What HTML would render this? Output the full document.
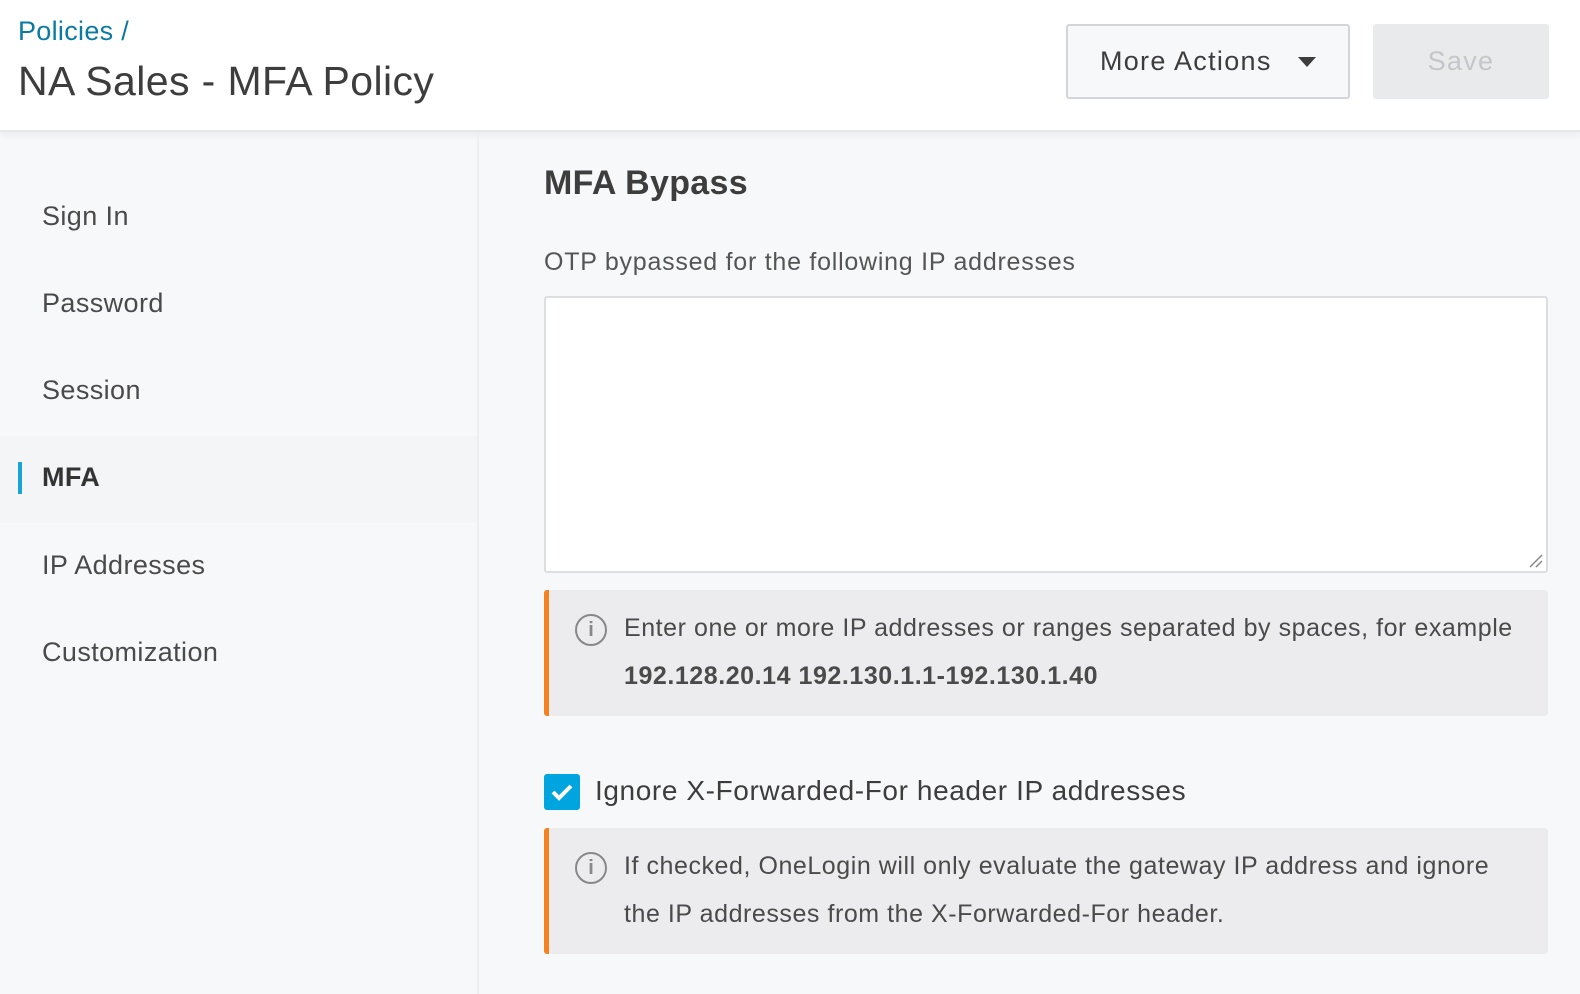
<!DOCTYPE html>
<html><head><style>
*{box-sizing:border-box;margin:0;padding:0}
body{width:1580px;height:994px;background:#f7f8fa;font-family:"Liberation Sans",sans-serif;color:#444;position:relative;overflow:hidden}
.hdr{position:absolute;left:0;top:0;width:1580px;height:132px;background:#fff;border-bottom:2px solid #e6e7e9;box-shadow:0 3px 8px rgba(0,0,0,.06)}
.bc{position:absolute;left:18px;top:16px;font-size:27px;color:#0a7aa3;letter-spacing:.3px}
.title{position:absolute;left:18px;top:58px;font-size:41px;color:#3d3d3d;letter-spacing:.4px}
.btn{position:absolute;top:24px;height:75px;border-radius:3px;font-size:27px;letter-spacing:1.3px;display:flex;align-items:center;justify-content:center}
.more{left:1066px;width:284px;border:2px solid #d3d5d8;background:#f7f8fa;color:#3d3d3d}
.save{left:1373px;width:176px;background:#e9eaec;color:#c4c6c9}
.side{position:absolute;left:0;top:133px;width:479px;height:861px;border-right:2px solid #eceef0}
.nav{position:absolute;left:42px;font-size:27px;color:#4a4a4a;letter-spacing:.4px}
.act{position:absolute;left:0;top:303px;width:477px;height:87px;background:#f3f5f7}
.bar{position:absolute;left:18px;top:462px;width:4px;height:32px;background:#1aa3d6}
.h2{position:absolute;left:544px;top:164px;font-size:34px;font-weight:bold;color:#3d3d3d;letter-spacing:.3px}
.lbl{position:absolute;left:544px;top:248px;font-size:25px;color:#555;letter-spacing:.75px}
.ta{position:absolute;left:544px;top:296px;width:1004px;height:277px;background:#fff;border:2px solid #dcdee1;border-radius:3px}
.info{position:absolute;left:544px;width:1004px;background:#ececee;border-left:5px solid #f5821f;border-radius:3px}
.info p{position:absolute;left:75px;font-size:25px;color:#4a4a4a;line-height:48px;letter-spacing:.55px}
.ic{position:absolute;left:26px;width:32px;height:32px;border:2px solid #888;border-radius:50%;color:#888;font-size:20px;font-weight:bold;text-align:center;line-height:28px}
.cb{position:absolute;left:544px;top:774px;width:36px;height:36px;background:#00a4de;border-radius:3px}
.cbl{position:absolute;left:595px;top:775px;font-size:28px;color:#3d3d3d;letter-spacing:.6px}
</style></head><body>
<div class="hdr">
<div class="bc">Policies /</div>
<div class="title">NA Sales - MFA Policy</div>
<div class="btn more">More Actions&nbsp;&nbsp;&nbsp;<svg width="18" height="10"><path d="M0 0h18L9 10z" fill="#3d3d3d"/></svg></div>
<div class="btn save">Save</div>
</div>
<div class="side">
<div class="act"></div>
</div>
<div class="bar"></div>
<div class="nav" style="top:201px">Sign In</div>
<div class="nav" style="top:288px">Password</div>
<div class="nav" style="top:375px">Session</div>
<div class="nav" style="top:462px;font-weight:bold;color:#333">MFA</div>
<div class="nav" style="top:550px">IP Addresses</div>
<div class="nav" style="top:637px">Customization</div>
<div class="h2">MFA Bypass</div>
<div class="lbl">OTP bypassed for the following IP addresses</div>
<div class="ta"><svg style="position:absolute;right:3px;bottom:3px" width="14" height="14"><path d="M13 1L1 13M13 7L7 13" stroke="#888" stroke-width="1.5"/></svg></div>
<div class="info" style="top:590px;height:126px"><div class="ic" style="top:24px">i</div><p style="top:14px">Enter one or more IP addresses or ranges separated by spaces, for example<br><b>192.128.20.14 192.130.1.1-192.130.1.40</b></p></div>
<div class="cb"><svg width="36" height="36"><path d="M9 18l6 6 12-12" stroke="#fff" stroke-width="4" fill="none"/></svg></div>
<div class="cbl">Ignore X-Forwarded-For header IP addresses</div>
<div class="info" style="top:828px;height:126px"><div class="ic" style="top:24px">i</div><p style="top:14px">If checked, OneLogin will only evaluate the gateway IP address and ignore<br>the IP addresses from the X-Forwarded-For header.</p></div>
</body></html>
